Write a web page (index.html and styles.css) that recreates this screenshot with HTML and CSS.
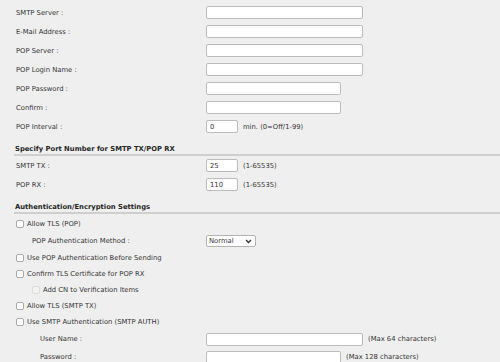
FILE: index.html
```html
<!DOCTYPE html>
<html lang="en">
<head>
    <meta charset="UTF-8">
    <title>E-Mail Settings</title>
    <link rel="stylesheet" href="styles.css">
</head>
<body>
    <div class="page">
        <div class="row"><span class="label">SMTP Server :</span><span class="field"><input class="text wide" type="text"></span></div>
        <div class="row"><span class="label">E-Mail Address :</span><span class="field"><input class="text wide" type="text"></span></div>
        <div class="row"><span class="label">POP Server :</span><span class="field"><input class="text wide" type="text"></span></div>
        <div class="row"><span class="label">POP Login Name :</span><span class="field"><input class="text wide" type="text"></span></div>
        <div class="row"><span class="label">POP Password :</span><span class="field"><input class="text medium" type="password"></span></div>
        <div class="row"><span class="label">Confirm :</span><span class="field"><input class="text medium" type="password"></span></div>
        <div class="row"><span class="label">POP Interval :</span><span class="field"><input class="text small" type="text" value="0"><span class="hint">min. (0=Off/1-99)</span></span></div>

        <h3 class="section">Specify Port Number for SMTP TX/POP RX</h3>
        <div class="row"><span class="label">SMTP TX :</span><span class="field"><input class="text small" type="text" value="25"><span class="hint">(1-65535)</span></span></div>
        <div class="row"><span class="label">POP RX :</span><span class="field"><input class="text small" type="text" value="110"><span class="hint">(1-65535)</span></span></div>

        <h3 class="section">Authentication/Encryption Settings</h3>
        <div class="options">
            <label class="check"><input type="checkbox"> Allow TLS (POP)</label>
            <div class="row select-row"><span class="label sub">POP Authentication Method :</span><span class="field">
                <span class="select">Normal
                    <svg width="7" height="5" viewBox="0 0 7 5"><path d="M1 1l2.5 2.5L6 1" fill="none" stroke="#333" stroke-width="1.4"/></svg>
                </span>
            </span></div>
            <label class="check"><input type="checkbox"> Use POP Authentication Before Sending</label>
            <label class="check"><input type="checkbox"> Confirm TLS Certificate for POP RX</label>
            <label class="check sub disabled"><input type="checkbox" disabled> Add CN to Verification Items</label>
            <label class="check"><input type="checkbox"> Allow TLS (SMTP TX)</label>
            <label class="check"><input type="checkbox"> Use SMTP Authentication (SMTP AUTH)</label>
            <div class="row user-row"><span class="label deep">User Name :</span><span class="field"><input class="text wide" type="text"><span class="hint">(Max 64 characters)</span></span></div>
            <div class="row user-row"><span class="label deep">Password :</span><span class="field"><input class="text medium" type="password"><span class="hint">(Max 128 characters)</span></span></div>
        </div>
    </div>
</body>
</html>
```

FILE: styles.css
```css
body {
    margin: 0;
    background-color: #f0eff0;
    color: #333333;
    font-family: "DejaVu Sans", Verdana, sans-serif;
    font-size: 6.8px;
    overflow: hidden;
}
.page {
    padding: 3px 0 0 14px;
}
.row {
    display: grid;
    grid-template-columns: 192px auto;
    align-items: center;
    height: 19px;
}
.label {
    padding-left: 2px;
}
.label.sub {
    padding-left: 18px;
}
.label.deep {
    padding-left: 26px;
}
.field {
    display: flex;
    align-items: center;
}
.text {
    box-sizing: border-box;
    height: 13px;
    margin: 0;
    padding: 0 3px;
    border: 1px solid #bcbcbc;
    border-radius: 2px;
    background: #ffffff;
    font-family: inherit;
    font-size: 6.8px;
    color: #333;
}
.wide {
    width: 157px;
}
.medium {
    width: 135px;
}
.small {
    width: 32px;
}
.hint {
    margin-left: 5px;
}
.section {
    margin: 8px 0 0;
    padding-left: 1px;
    line-height: 10px;
    font-size: 6.8px;
    font-weight: bold;
    color: #262626;
    border-bottom: 2px solid #cfcfcf;
}
.options {
    padding-top: 2px;
}
.check {
    display: flex;
    align-items: center;
    gap: 3px;
    height: 16px;
    padding-left: 2px;
}
.check input {
    appearance: none;
    box-sizing: border-box;
    width: 8px;
    height: 8px;
    margin: 0;
    border: 1px solid #a9a9a9;
    border-radius: 2px;
    background: #ffffff;
}
.check.sub {
    padding-left: 18px;
}
.check.disabled input {
    border-color: #dcdcdc;
    background: #f3f3f3;
}
.select-row {
    height: 18px;
}
.select {
    box-sizing: border-box;
    display: flex;
    align-items: center;
    justify-content: space-between;
    width: 50px;
    height: 12px;
    padding: 0 3px 0 2px;
    border: 1px solid #b3b3b3;
    border-radius: 2px;
    background: #ffffff;
    color: #333;
}
.user-row {
    height: 18px;
}
```
